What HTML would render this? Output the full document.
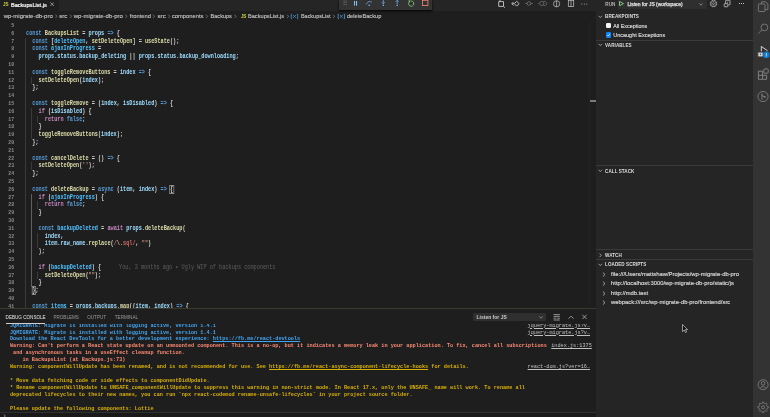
<!DOCTYPE html>
<html><head><meta charset="utf-8">
<style>
*{box-sizing:border-box}
html,body{margin:0;padding:0;width:770px;height:417px;overflow:hidden;background:#1e1e1e;font-family:"Liberation Sans",sans-serif}
.abs{position:absolute}
#editor{will-change:transform;position:absolute;left:0;top:0;width:596px;height:308px;background:#1e1e1e;overflow:hidden}
#tabbar{position:absolute;left:0;top:0;width:596px;height:11px;background:#252526}
#tab{position:absolute;left:0;top:0;width:59px;height:11px;background:#1e1e1e}
.ln{font-weight:bold;position:absolute;left:0;width:14.2px;text-align:right;height:7.8px;line-height:7.8px;font-family:"Liberation Mono",monospace;font-size:5.9px;letter-spacing:0px;color:#8e8e8e;white-space:pre;transform:scaleX(0.828);transform-origin:100% 0}
.cl{font-weight:bold;position:absolute;left:26.2px;height:7.8px;line-height:7.8px;font-family:"Liberation Mono",monospace;font-size:6.3px;letter-spacing:0px;color:#d4d4d4;white-space:pre;transform:scaleX(0.828);transform-origin:0 0}
.blame{color:#5e5e5e;font-weight:normal}
.box{outline:0.5px solid #888;color:#d4d4d4}
.ig{position:absolute;width:0.6px;background:#3a3a3a}
.ig.act{background:#606060}
#bc{position:absolute;left:0;top:11px;width:400px;height:10px;line-height:10px;font-size:5.82px;color:#c4c4c4;-webkit-text-stroke:0.12px #c4c4c4;white-space:nowrap}
#bc span{position:absolute;top:0}
#bc .gt{font-size:4.5px;color:#a0a0a0;transform:scaleX(0.7)}
#panel{will-change:transform;position:absolute;left:0;top:308px;width:596px;height:109px;background:#1e1e1e;border-top:0.8px solid #3b3a2c;overflow:hidden}
.co{font-weight:bold;position:absolute;left:9.7px;height:7px;line-height:7px;font-family:"Liberation Mono",monospace;font-size:6.0px;letter-spacing:0px;white-space:pre;transform:scaleX(0.8667);transform-origin:0 0}
.co.b{color:#42a4f0}
.co.r{color:#fb8a72}
.co.y{color:#d8b000}
.co.lk{left:auto;right:4px;transform-origin:100% 0;color:#c0c0c0;text-decoration:underline;font-weight:normal}
#sidebar{will-change:transform;position:absolute;left:595.7px;top:0;width:157.3px;height:417px;background:#252526}
#activity{position:absolute;left:753px;top:0;width:17px;height:417px;background:#333333}
.sh{position:absolute;left:7.8px;font-size:4.58px;font-weight:bold;color:#dedede;letter-spacing:0.05px;line-height:6px;height:6px}
.sep{position:absolute;left:-1.3px;width:157.3px;height:0.6px;background:#3a3a3a}
.chev{position:absolute;left:0.8px}
.pt{position:absolute;top:6.2px;font-size:4.6px;color:#9a9a9a;line-height:6px;white-space:nowrap}
.sbt{position:absolute;font-size:5.6px;color:#d8d8d8;-webkit-text-stroke:0.16px #d8d8d8;line-height:7px;white-space:nowrap}
</style></head>
<body>
<div id="editor">
  <div id="tabbar"></div>
  <div id="tab"></div>
  <div class="ln" style="top:22.00px">5</div>
<div class="cl" style="top:22.00px"></div>
<div class="ln" style="top:29.80px">6</div>
<div class="cl" style="top:29.80px"><span style="color:#569cd6">const</span><span style="color:#d4d4d4"> </span><span style="color:#dcdcaa">BackupsList</span><span style="color:#d4d4d4"> = </span><span style="color:#9cdcfe">props</span><span style="color:#d4d4d4"> </span><span style="color:#569cd6">=&gt;</span><span style="color:#d4d4d4"> {</span></div>
<div class="ln" style="top:37.60px">7</div>
<div class="cl" style="top:37.60px"><span style="color:#d4d4d4">  </span><span style="color:#569cd6">const</span><span style="color:#d4d4d4"> [</span><span style="color:#4fc1ff">deleteOpen</span><span style="color:#d4d4d4">, </span><span style="color:#dcdcaa">setDeleteOpen</span><span style="color:#d4d4d4">] = </span><span style="color:#dcdcaa">useState</span><span style="color:#d4d4d4">();</span></div>
<div class="ln" style="top:45.40px">8</div>
<div class="cl" style="top:45.40px"><span style="color:#d4d4d4">  </span><span style="color:#569cd6">const</span><span style="color:#d4d4d4"> </span><span style="color:#4fc1ff">ajaxInProgress</span><span style="color:#d4d4d4"> =</span></div>
<div class="ln" style="top:53.20px">9</div>
<div class="cl" style="top:53.20px"><span style="color:#d4d4d4">    </span><span style="color:#9cdcfe">props</span><span style="color:#d4d4d4">.</span><span style="color:#9cdcfe">status</span><span style="color:#d4d4d4">.</span><span style="color:#9cdcfe">backup_deleting</span><span style="color:#d4d4d4"> || </span><span style="color:#9cdcfe">props</span><span style="color:#d4d4d4">.</span><span style="color:#9cdcfe">status</span><span style="color:#d4d4d4">.</span><span style="color:#9cdcfe">backup_downloading</span><span style="color:#d4d4d4">;</span></div>
<div class="ln" style="top:61.00px">10</div>
<div class="cl" style="top:61.00px"></div>
<div class="ln" style="top:68.80px">11</div>
<div class="cl" style="top:68.80px"><span style="color:#d4d4d4">  </span><span style="color:#569cd6">const</span><span style="color:#d4d4d4"> </span><span style="color:#dcdcaa">toggleRemoveButtons</span><span style="color:#d4d4d4"> = </span><span style="color:#9cdcfe">index</span><span style="color:#d4d4d4"> </span><span style="color:#569cd6">=&gt;</span><span style="color:#d4d4d4"> {</span></div>
<div class="ln" style="top:76.60px">12</div>
<div class="cl" style="top:76.60px"><span style="color:#d4d4d4">    </span><span style="color:#dcdcaa">setDeleteOpen</span><span style="color:#d4d4d4">(</span><span style="color:#9cdcfe">index</span><span style="color:#d4d4d4">);</span></div>
<div class="ln" style="top:84.40px">13</div>
<div class="cl" style="top:84.40px"><span style="color:#d4d4d4">  };</span></div>
<div class="ln" style="top:92.20px">14</div>
<div class="cl" style="top:92.20px"></div>
<div class="ln" style="top:100.00px">15</div>
<div class="cl" style="top:100.00px"><span style="color:#d4d4d4">  </span><span style="color:#569cd6">const</span><span style="color:#d4d4d4"> </span><span style="color:#dcdcaa">toggleRemove</span><span style="color:#d4d4d4"> = (</span><span style="color:#9cdcfe">index</span><span style="color:#d4d4d4">, </span><span style="color:#9cdcfe">isDisabled</span><span style="color:#d4d4d4">) </span><span style="color:#569cd6">=&gt;</span><span style="color:#d4d4d4"> {</span></div>
<div class="ln" style="top:107.80px">16</div>
<div class="cl" style="top:107.80px"><span style="color:#d4d4d4">    </span><span style="color:#c586c0">if</span><span style="color:#d4d4d4"> (</span><span style="color:#9cdcfe">isDisabled</span><span style="color:#d4d4d4">) {</span></div>
<div class="ln" style="top:115.60px">17</div>
<div class="cl" style="top:115.60px"><span style="color:#d4d4d4">      </span><span style="color:#c586c0">return</span><span style="color:#d4d4d4"> </span><span style="color:#569cd6">false</span><span style="color:#d4d4d4">;</span></div>
<div class="ln" style="top:123.40px">18</div>
<div class="cl" style="top:123.40px"><span style="color:#d4d4d4">    }</span></div>
<div class="ln" style="top:131.20px">19</div>
<div class="cl" style="top:131.20px"><span style="color:#d4d4d4">    </span><span style="color:#dcdcaa">toggleRemoveButtons</span><span style="color:#d4d4d4">(</span><span style="color:#9cdcfe">index</span><span style="color:#d4d4d4">);</span></div>
<div class="ln" style="top:139.00px">20</div>
<div class="cl" style="top:139.00px"><span style="color:#d4d4d4">  };</span></div>
<div class="ln" style="top:146.80px">21</div>
<div class="cl" style="top:146.80px"></div>
<div class="ln" style="top:154.60px">22</div>
<div class="cl" style="top:154.60px"><span style="color:#d4d4d4">  </span><span style="color:#569cd6">const</span><span style="color:#d4d4d4"> </span><span style="color:#dcdcaa">cancelDelete</span><span style="color:#d4d4d4"> = () </span><span style="color:#569cd6">=&gt;</span><span style="color:#d4d4d4"> {</span></div>
<div class="ln" style="top:162.40px">23</div>
<div class="cl" style="top:162.40px"><span style="color:#d4d4d4">    </span><span style="color:#dcdcaa">setDeleteOpen</span><span style="color:#d4d4d4">(</span><span style="color:#ce9178">&#x27;&#x27;</span><span style="color:#d4d4d4">);</span></div>
<div class="ln" style="top:170.20px">24</div>
<div class="cl" style="top:170.20px"><span style="color:#d4d4d4">  };</span></div>
<div class="ln" style="top:178.00px">25</div>
<div class="cl" style="top:178.00px"></div>
<div class="ln" style="top:185.80px">26</div>
<div class="cl" style="top:185.80px"><span style="color:#d4d4d4">  </span><span style="color:#569cd6">const</span><span style="color:#d4d4d4"> </span><span style="color:#dcdcaa">deleteBackup</span><span style="color:#d4d4d4"> = </span><span style="color:#569cd6">async</span><span style="color:#d4d4d4"> (</span><span style="color:#9cdcfe">item</span><span style="color:#d4d4d4">, </span><span style="color:#9cdcfe">index</span><span style="color:#d4d4d4">) </span><span style="color:#569cd6">=&gt;</span><span style="color:#d4d4d4"> </span><span class="box">{</span></div>
<div class="ln" style="top:193.60px">27</div>
<div class="cl" style="top:193.60px"><span style="color:#d4d4d4">    </span><span style="color:#c586c0">if</span><span style="color:#d4d4d4"> (</span><span style="color:#4fc1ff">ajaxInProgress</span><span style="color:#d4d4d4">) {</span></div>
<div class="ln" style="top:201.40px">28</div>
<div class="cl" style="top:201.40px"><span style="color:#d4d4d4">      </span><span style="color:#c586c0">return</span><span style="color:#d4d4d4"> </span><span style="color:#569cd6">false</span><span style="color:#d4d4d4">;</span></div>
<div class="ln" style="top:209.20px">29</div>
<div class="cl" style="top:209.20px"><span style="color:#d4d4d4">    }</span></div>
<div class="ln" style="top:217.00px">30</div>
<div class="cl" style="top:217.00px"></div>
<div class="ln" style="top:224.80px">31</div>
<div class="cl" style="top:224.80px"><span style="color:#d4d4d4">    </span><span style="color:#569cd6">const</span><span style="color:#d4d4d4"> </span><span style="color:#4fc1ff">backupDeleted</span><span style="color:#d4d4d4"> = </span><span style="color:#c586c0">await</span><span style="color:#d4d4d4"> </span><span style="color:#9cdcfe">props</span><span style="color:#d4d4d4">.</span><span style="color:#dcdcaa">deleteBackup</span><span style="color:#d4d4d4">(</span></div>
<div class="ln" style="top:232.60px">32</div>
<div class="cl" style="top:232.60px"><span style="color:#d4d4d4">      </span><span style="color:#9cdcfe">index</span><span style="color:#d4d4d4">,</span></div>
<div class="ln" style="top:240.40px">33</div>
<div class="cl" style="top:240.40px"><span style="color:#d4d4d4">      </span><span style="color:#9cdcfe">item</span><span style="color:#d4d4d4">.</span><span style="color:#9cdcfe">raw_name</span><span style="color:#d4d4d4">.</span><span style="color:#dcdcaa">replace</span><span style="color:#d4d4d4">(</span><span style="color:#d16969">/</span><span style="color:#d7ba7d">\.</span><span style="color:#d16969">sql/</span><span style="color:#d4d4d4">, </span><span style="color:#ce9178">&quot;&quot;</span><span style="color:#d4d4d4">)</span></div>
<div class="ln" style="top:248.20px">34</div>
<div class="cl" style="top:248.20px"><span style="color:#d4d4d4">    </span><span style="color:#d4d4d4">)</span><span style="color:#d4d4d4">;</span></div>
<div class="ln" style="top:256.00px">35</div>
<div class="cl" style="top:256.00px"></div>
<div class="ln" style="top:263.80px">36</div>
<div class="cl" style="top:263.80px"><span style="color:#d4d4d4">    </span><span style="color:#c586c0">if</span><span style="color:#d4d4d4"> (</span><span style="color:#4fc1ff">backupDeleted</span><span style="color:#d4d4d4">) {</span></div>
<div class="ln" style="top:271.60px">37</div>
<div class="cl" style="top:271.60px"><span style="color:#d4d4d4">      </span><span style="color:#dcdcaa">setDeleteOpen</span><span style="color:#d4d4d4">(</span><span style="color:#ce9178">&quot;&quot;</span><span style="color:#d4d4d4">);</span></div>
<div class="ln" style="top:279.40px">38</div>
<div class="cl" style="top:279.40px"><span style="color:#d4d4d4">    }</span></div>
<div class="ln" style="top:287.20px">39</div>
<div class="cl" style="top:287.20px"><span style="color:#d4d4d4">  </span><span class="box">}</span><span style="color:#d4d4d4">;</span></div>
<div class="ln" style="top:295.00px">40</div>
<div class="cl" style="top:295.00px"></div>
<div class="ln" style="top:302.80px">41</div>
<div class="cl" style="top:302.80px"><span style="color:#d4d4d4">  </span><span style="color:#569cd6">const</span><span style="color:#d4d4d4"> </span><span style="color:#4fc1ff">items</span><span style="color:#d4d4d4"> = </span><span style="color:#9cdcfe">props</span><span style="color:#d4d4d4">.</span><span style="color:#9cdcfe">backups</span><span style="color:#d4d4d4">.</span><span style="color:#dcdcaa">map</span><span style="color:#d4d4d4">((</span><span style="color:#9cdcfe">item</span><span style="color:#d4d4d4">, </span><span style="color:#9cdcfe">index</span><span style="color:#d4d4d4">) </span><span style="color:#569cd6">=&gt;</span><span style="color:#d4d4d4"> {</span></div>
<div class="ig" style="left:24.80px;top:37.60px;height:273.00px"></div>
<div class="ig" style="left:31.06px;top:76.60px;height:7.80px"></div>
<div class="ig" style="left:31.06px;top:107.80px;height:31.20px"></div>
<div class="ig" style="left:37.32px;top:115.60px;height:7.80px"></div>
<div class="ig" style="left:31.06px;top:162.40px;height:7.80px"></div>
<div class="ig act" style="left:31.06px;top:193.60px;height:93.60px"></div>
<div class="ig" style="left:37.32px;top:201.40px;height:7.80px"></div>
<div class="ig" style="left:37.32px;top:232.60px;height:15.60px"></div>
<div class="ig" style="left:37.32px;top:271.60px;height:7.80px"></div>
<div class="cl blame" style="top:263.80px;left:119px">You, 3 months ago • Ugly WIP of backups components</div>

  <div class="abs" style="left:3.1px;top:3.4px;font-size:4.6px;font-weight:bold;color:#cbcb41;line-height:4px;letter-spacing:-0.2px">JS</div>
  <div class="abs" style="left:10.9px;top:1.6px;font-size:5.62px;color:#ffffff;-webkit-text-stroke:0.2px #fff;line-height:7px;white-space:nowrap">BackupsList.js</div>
  <svg class="abs" style="left:49.5px;top:2.3px" width="4.4" height="4.4" viewBox="0 0 4 4"><path d="M0.3 0.3L3.7 3.7M3.7 0.3L0.3 3.7" stroke="#c5c5c5" stroke-width="0.6"/></svg>
  <div id="bc">
    <span style="left:3.65px;font-size:6.02px">wp-migrate-db-pro</span>
    <span style="left:73.75px;font-size:6.03px">wp-migrate-db-pro</span>
    <span style="left:59.25px;font-size:6.11px">src</span>
    <span style="left:157.55px;font-size:6.11px">src</span>
    <span style="left:129.85px;font-size:5.74px">frontend</span>
    <span style="left:171.95px;font-size:5.79px">components</span>
    <span style="left:210.55px;font-size:5.57px">Backups</span>
    <span style="left:247.95px;font-size:5.66px">BackupsList.js</span>
    <span style="left:300.95px;font-size:5.48px">BackupsList</span>
    <span style="left:346.95px;font-size:5.68px">deleteBackup</span>
    <svg class="abs" style="left:0;top:0" width="400" height="10" viewBox="0 11 400 10">
      <g stroke="#a8a8a8" stroke-width="0.55" fill="none"><path d="M55.4 14.6 L57 16.3 L55.4 18"/><path d="M70 14.6 L71.6 16.3 L70 18"/><path d="M125.3 14.6 L126.9 16.3 L125.3 18"/><path d="M153.0 14.6 L154.6 16.3 L153.0 18"/><path d="M168.3 14.6 L169.9 16.3 L168.3 18"/><path d="M206.0 14.6 L207.6 16.3 L206.0 18"/><path d="M234.5 14.6 L236.1 16.3 L234.5 18"/><path d="M287.1 14.6 L288.7 16.3 L287.1 18"/><path d="M333.0 14.6 L334.6 16.3 L333.0 18"/></g>
      <text x="241" y="18.2" font-family="Liberation Sans" font-weight="bold" font-size="4.6" fill="#cbcb41" letter-spacing="-0.3">JS</text>
      <g stroke="#4b9fdf" stroke-width="0.75" fill="none"><path d="M292.1 14.2 h-0.8 v4.5 h0.8 M296.9 14.2 h0.8 v4.5 h-0.8"/><path d="M293.1 15 L295.9 17.8 M295.9 15 L293.1 17.8"/></g>
      <g stroke="#4b9fdf" stroke-width="0.75" fill="none"><path d="M338.9 14.2 h-0.8 v4.5 h0.8 M343.7 14.2 h0.8 v4.5 h-0.8"/><path d="M339.9 15 L342.7 17.8 M342.7 15 L339.9 17.8"/></g>
    </svg>
  </div>
  <div class="abs" style="left:338.6px;top:0;width:93.1px;height:9.7px;background:#333333;box-shadow:0 1.2px 2px #000"></div>
  <svg class="abs" style="left:338px;top:0" width="96" height="10" viewBox="338 0 96 10">
    <g fill="#7f8a7f"><rect x="343.6" y="0.6" width="1" height="0.8"/><rect x="345.6" y="0.6" width="1" height="0.8"/><rect x="343.6" y="2.3" width="1" height="0.8"/><rect x="345.6" y="2.3" width="1" height="0.8"/><rect x="343.6" y="4" width="1" height="0.8"/><rect x="345.6" y="4" width="1" height="0.8"/></g>
    <g fill="#75beff"><rect x="354" y="1" width="1.1" height="4.6"/><rect x="356" y="1" width="1.1" height="4.6"/></g>
    <path d="M366.3 4.4 C367.5 1.2 370.5 0.8 372 2.6" stroke="#75beff" stroke-width="0.7" fill="none"/><circle cx="369.2" cy="5.2" r="0.8" fill="#75beff"/>
    <path d="M383.3 0 V3.6 M381.8 2.2 L383.3 3.7 L384.8 2.2" stroke="#75beff" stroke-width="0.7" fill="none"/><circle cx="383.3" cy="5.2" r="0.8" fill="#75beff"/>
    <path d="M397.2 4 V0.4 M395.7 1.8 L397.2 0.3 L398.7 1.8" stroke="#75beff" stroke-width="0.7" fill="none"/><circle cx="397.2" cy="5.2" r="0.8" fill="#75beff"/>
    <path d="M409 2.2 A2.6 2.6 0 1 0 411.2 1" stroke="#89d185" stroke-width="0.8" fill="none"/><path d="M408.2 0.6 L410.6 0.6 L409.6 2.8Z" fill="#89d185"/>
    <rect x="422.4" y="0.3" width="5.5" height="5.3" stroke="#f48771" stroke-width="0.8" fill="none"/>
  </svg>
  <svg class="abs" style="left:494px;top:0" width="96" height="10" viewBox="494 0 96 10">
    <g stroke="#c8c8c8" stroke-width="0.9" fill="none">
      <path d="M498.7 1.6 h4.8 v4.8 h-4.8z M500 0 v1.6 M503.5 6.4 l1.4 1.2"/>
      <path d="M511.8 3.7 L513.6 1.9 M511.8 3.7 L513.6 5.5 M512.2 3.7 h1.6"/>
      <path d="M514.3 3.7 L516.7 1.3 L519.1 3.7 L516.7 6.1 Z"/>
    </g>
    <g stroke="#8a8a8a" stroke-width="0.6" fill="none">
      <circle cx="529" cy="3.5" r="1.8"/><path d="M525.3 3.5 h1.9 M530.8 3.5 h2"/>
      <circle cx="541.8" cy="3.5" r="2.1"/><path d="M543.6 1.6 A2.1 2.1 0 1 1 543.6 5.4"/><path d="M539 3.5 h-0.8"/>
    </g>
    <g stroke="#c5c5c5" stroke-width="0.7" fill="none">
      <circle cx="556.6" cy="3.8" r="3.1"/><path d="M556.6 0.7 v6.2"/>
      <rect x="568.3" y="0.3" width="5.4" height="6.2"/><path d="M571 0.3 v6.2"/>
    </g>
    <g fill="#c5c5c5"><circle cx="581.8" cy="4" r="0.5"/><circle cx="584.3" cy="4" r="0.5"/><circle cx="586.8" cy="4" r="0.5"/></g>
  </svg>
  <div class="abs" style="left:589px;top:21px;width:1.4px;height:287px;background:#222222"></div>
  <div class="abs" style="left:590px;top:100px;width:6px;height:2px;background:#7a7a7a"></div>
</div>
<div id="panel">
  <div class="abs" style="left:0;top:15.3px;width:596px;height:88px;overflow:hidden"><div class="co b" style="top:-2.70px">JQMIGRATE: Migrate is installed with logging active, version 1.4.1</div>
<div class="co lk" style="top:-2.70px;right:6.2px">jquery-migrate.js?v…</div>
<div class="co b" style="top:4.21px">JQMIGRATE: Migrate is installed with logging active, version 1.4.1</div>
<div class="co lk" style="top:4.21px;right:6.2px">jquery-migrate.js?v…</div>
<div class="co b" style="top:11.12px">Download the React DevTools for a better development experience: <u>https://fb.me/react-devtools</u></div>
<div class="co r" style="top:18.03px">Warning: Can&#x27;t perform a React state update on an unmounted component. This is a no-op, but it indicates a memory leak in your application. To fix, cancel all subscriptions</div>
<div class="co lk" style="top:18.03px;right:4px">index.js:1375</div>
<div class="co r" style="top:24.94px"> and asynchronous tasks in a useEffect cleanup function.</div>
<div class="co r" style="top:31.85px">    in BackupsList (at Backups.js:73)</div>
<div class="co y" style="top:38.76px">Warning: componentWillUpdate has been renamed, and is not recommended for use. See <u>https://fb.me/react-async-component-lifecycle-hooks</u> for details.</div>
<div class="co lk" style="top:38.76px;right:6.2px">react-dom.js?ver=16…</div>
<div class="co y" style="top:45.67px"></div>
<div class="co y" style="top:52.58px">* Move data fetching code or side effects to componentDidUpdate.</div>
<div class="co y" style="top:59.49px">* Rename componentWillUpdate to UNSAFE_componentWillUpdate to suppress this warning in non-strict mode. In React 17.x, only the UNSAFE_ name will work. To rename all</div>
<div class="co y" style="top:66.40px">deprecated lifecycles to their new names, you can run `npx react-codemod rename-unsafe-lifecycles` in your project source folder.</div>
<div class="co y" style="top:73.31px"></div>
<div class="co y" style="top:80.22px">Please update the following components: Lottie</div></div>

  <div class="pt" style="left:5.6px;color:#e7e7e7">DEBUG CONSOLE</div>
  <div class="abs" style="left:5.6px;top:13.7px;width:39.8px;height:0.7px;background:#d0d0d0"></div>
  <div class="pt" style="left:53.4px">PROBLEMS</div>
  <div class="pt" style="left:87.2px">OUTPUT</div>
  <div class="pt" style="left:114.8px">TERMINAL</div>
  <div class="abs" style="left:473px;top:4.4px;width:73px;height:7.6px;background:#2f2f30;border-radius:1px"></div>
  <div class="abs" style="left:476.5px;top:4.6px;font-size:5px;font-weight:bold;color:#cccccc;line-height:7px;white-space:nowrap">Listen for JS</div>
  <svg class="abs" style="left:538.6px;top:6.8px" width="4" height="3" viewBox="0 0 4 3"><path d="M0.3 0.6 L2 2.2 L3.7 0.6" stroke="#c5c5c5" stroke-width="0.6" fill="none"/></svg>
  <svg class="abs" style="left:553px;top:4px" width="36" height="8" viewBox="553 312 36 8">
    <g stroke="#c5c5c5" stroke-width="0.7" fill="none">
      <path d="M553.6 313.6 h6.2 M553.6 315.4 h6.2 M553.6 317.2 h2.6 M557.2 317.2 h2.6 M553.6 319 h6.2"/>
      <path d="M568.6 317.6 L571.1 315.1 L573.6 317.6"/>
      <path d="M582.4 313.8 L586.6 318 M586.6 313.8 L582.4 318"/>
    </g>
  </svg>
  <div class="abs" style="left:0;top:103px;width:596px;height:1px;background:#303030"></div>
  <div class="abs" style="left:0;top:104px;width:596px;height:6px;background:#1a1a1a"></div>
  <svg class="abs" style="left:2.6px;top:105.2px" width="4" height="4" viewBox="0 0 4 4"><path d="M0.6 0.4 L2.4 2 L0.6 3.6" stroke="#c5c5c5" stroke-width="0.6" fill="none"/></svg>
</div>
<div id="sidebar"><div style="position:absolute;left:1.3px;top:0;width:157px;height:417px">
  <div class="sbt" style="left:8px;top:0.5px;font-size:4.66px;color:#c4c4c4;line-height:7px;-webkit-text-stroke:0.1px #c4c4c4">RUN</div>
  <div class="abs" style="left:20.6px;top:0;width:89.4px;height:8.6px;background:#2f2f30"></div>
  <svg class="abs" style="left:21.8px;top:1.2px" width="5" height="5.2" viewBox="0 0 5 5.2"><path d="M0.5 0.5 L4.5 2.6 L0.5 4.7Z" stroke="#89d185" stroke-width="0.9" fill="none" stroke-linejoin="round"/></svg>
  <div class="sbt" style="left:30.2px;top:0.8px;font-size:4.9px;color:#e0e0e0;line-height:7px;-webkit-text-stroke:0.25px #e0e0e0">Listen for JS (workspace)</div>
  <svg class="abs" style="left:102px;top:3px" width="4" height="3" viewBox="0 0 4 3"><path d="M0.3 0.6 L2 2.2 L3.7 0.6" stroke="#c5c5c5" stroke-width="0.6" fill="none"/></svg>
  <svg class="abs" style="left:111.9px;top:0" width="9" height="8" viewBox="0 0 9 8"><path d="M6.96 4.04 L7.69 4.46 L7.36 5.25 L6.55 5.03 L6.27 5.37 L5.93 5.65 L6.15 6.46 L5.36 6.79 L4.94 6.06 L4.50 6.10 L4.06 6.06 L3.64 6.79 L2.85 6.46 L3.07 5.65 L2.73 5.37 L2.45 5.03 L1.64 5.25 L1.31 4.46 L2.04 4.04 L2.00 3.60 L2.04 3.16 L1.31 2.74 L1.64 1.95 L2.45 2.17 L2.73 1.83 L3.07 1.55 L2.85 0.74 L3.64 0.41 L4.06 1.14 L4.50 1.10 L4.94 1.14 L5.36 0.41 L6.15 0.74 L5.93 1.55 L6.27 1.83 L6.55 2.17 L7.36 1.95 L7.69 2.74 L6.96 3.16 L7.00 3.60Z" stroke="#c8c8c8" stroke-width="0.75" fill="none"/><circle cx="4.5" cy="3.6" r="0.9" stroke="#c8c8c8" stroke-width="0.6" fill="none"/></svg>
  <svg class="abs" style="left:126px;top:0" width="9" height="8" viewBox="0 0 9 8"><path d="M2.6 3.4 V0.8 q0 -0.5 0.5 -0.5 h3.4 q0.5 0 0.5 0.5 v3.6 q0 0.5 -0.5 0.5 h-1.2" stroke="#c8c8c8" stroke-width="0.8" fill="none"/><rect x="1.2" y="3.7" width="3.6" height="3.1" rx="0.5" stroke="#c8c8c8" stroke-width="0.8" fill="none"/><path d="M4.6 1.8 v1.6" stroke="#c8c8c8" stroke-width="0.6"/></svg>
  <div class="abs" style="left:142px;top:3.2px;width:1px;height:1px;background:#c5c5c5;box-shadow:2px 0 #c5c5c5,4px 0 #c5c5c5"></div>

  <svg class="chev" style="top:14.5px" width="5" height="4" viewBox="0 0 5 4"><path d="M0.6 0.8 L2.3 2.6 L4 0.8" stroke="#c8c8c8" stroke-width="0.7" fill="none"/></svg>
  <div class="sh" style="top:14.3px">BREAKPOINTS</div>
  <div class="abs" style="left:8.5px;top:22.9px;width:5.6px;height:5.6px;border-radius:1.2px;background:#f5f5f5"></div>
  <div class="sbt" style="left:15.9px;top:22.9px;font-size:5.45px">All Exceptions</div>
  <div class="abs" style="left:8.5px;top:32.1px;width:5.6px;height:5.6px;border-radius:1.2px;background:#0a84ff"></div>
  <svg class="abs" style="left:8.7px;top:32.1px" width="5.3" height="5.7" viewBox="0 0 5.3 5.7"><path d="M1.3 3 L2.3 4 L4 1.8" stroke="#fff" stroke-width="0.7" fill="none"/></svg>
  <div class="sbt" style="left:15.9px;top:31.9px;font-size:5.5px">Uncaught Exceptions</div>
  <div class="sep" style="top:40.3px"></div>
  <svg class="chev" style="top:43.3px" width="5" height="4" viewBox="0 0 5 4"><path d="M0.6 0.8 L2.3 2.6 L4 0.8" stroke="#c8c8c8" stroke-width="0.7" fill="none"/></svg>
  <div class="sh" style="top:42.9px">VARIABLES</div>
  <div class="sep" style="top:165px"></div>
  <svg class="chev" style="top:169.3px" width="5" height="4" viewBox="0 0 5 4"><path d="M0.6 0.8 L2.3 2.6 L4 0.8" stroke="#c8c8c8" stroke-width="0.7" fill="none"/></svg>
  <div class="sh" style="top:169.1px">CALL STACK</div>
  <div class="sep" style="top:249.1px"></div>
  <svg class="chev" style="top:252.5px;left:0.8px" width="5" height="5" viewBox="0 0 5 5"><path d="M1.5 0.6 L3.3 2.4 L1.5 4.2" stroke="#c8c8c8" stroke-width="0.7" fill="none"/></svg>
  <div class="sh" style="top:253.3px">WATCH</div>
  <div class="sep" style="top:259.2px"></div>
  <svg class="chev" style="top:262.9px" width="5" height="4" viewBox="0 0 5 4"><path d="M0.6 0.8 L2.3 2.6 L4 0.8" stroke="#c8c8c8" stroke-width="0.7" fill="none"/></svg>
  <div class="sh" style="top:262.3px">LOADED SCRIPTS</div>
  <svg class="abs" style="left:5.0px;top:272.00px" width="5" height="6" viewBox="0 0 5 6"><path d="M0.9 0.6 L3 2.6 L0.9 4.6" stroke="#c8c8c8" stroke-width="0.75" fill="none"/></svg>
<div class="sbt" style="left:13.8px;top:271.00px;font-size:5.85px">file:///Users/mattshaw/Projects/wp-migrate-db-pro</div>
<svg class="abs" style="left:5.0px;top:281.40px" width="5" height="6" viewBox="0 0 5 6"><path d="M0.9 0.6 L3 2.6 L0.9 4.6" stroke="#c8c8c8" stroke-width="0.75" fill="none"/></svg>
<div class="sbt" style="left:13.8px;top:280.40px;font-size:5.85px">http://localhost:3000/wp-migrate-db-pro/static/js</div>
<svg class="abs" style="left:5.0px;top:290.80px" width="5" height="6" viewBox="0 0 5 6"><path d="M0.9 0.6 L3 2.6 L0.9 4.6" stroke="#c8c8c8" stroke-width="0.75" fill="none"/></svg>
<div class="sbt" style="left:13.8px;top:289.80px;font-size:5.85px">http://mdb.test</div>
<svg class="abs" style="left:5.0px;top:300.20px" width="5" height="6" viewBox="0 0 5 6"><path d="M0.9 0.6 L3 2.6 L0.9 4.6" stroke="#c8c8c8" stroke-width="0.75" fill="none"/></svg>
<div class="sbt" style="left:13.8px;top:299.20px;font-size:5.85px">webpack:///src/wp-migrate-db-pro/frontend/src</div>
  <svg class="abs" style="left:84.5px;top:323.6px" width="7" height="9" viewBox="0 0 7 9"><path d="M0.5 0.5 V7.6 L2.2 6 L3.5 8.5 L4.6 8 L3.4 5.6 L5.6 5.6Z" fill="#111" stroke="#e8e8e8" stroke-width="0.6"/></svg>
</div></div>
<div id="activity">
  <svg class="abs" style="left:0;top:0" width="17" height="417" viewBox="753 0 17 417">
    <g stroke="#858585" stroke-width="0.8" fill="none" stroke-linejoin="round">
      <path d="M761.6 3.9 V1.8 h4.1 l2.2 2.2 v5.6 h-2.9"/><path d="M758.4 4.7 q0 -0.8 0.8 -0.8 h5 q0.8 0 0.8 0.8 v6 q0 0.8 -0.8 0.8 h-5 q-0.8 0 -0.8 -0.8z"/>
      <circle cx="764.4" cy="27.4" r="3.4"/><path d="M762 29.8 L758.4 33.4"/>
      <path d="M759.4 65.5"/>
      <path d="M758.4 71.2 h4.2 v8.1 h-4.2z M758.4 75.3 h8.2 v4 h-4" stroke-width="0.95"/><rect x="763.8" y="68.9" width="4.4" height="4.3" rx="0.9" stroke-width="0.95"/>
      <circle cx="763" cy="96.5" r="5.1"/><path d="M762 93.3 v6.4 M762 94.8 q0.4 1.8 2.6 2" stroke-width="0.9"/><circle cx="764.9" cy="96.8" r="0.9" fill="#858585" stroke="none"/>
      <circle cx="763.1" cy="384.7" r="5"/><circle cx="763.1" cy="383.3" r="1.8"/><path d="M760 388.3 q3.1 -3.4 6.2 0"/>
      <circle cx="763.1" cy="407.3" r="1.5"/>
    </g>
    <path d="M767.01 406.44 L768.36 406.62 L768.36 407.98 L767.01 408.16 L766.80 408.83 L766.47 409.46 L767.30 410.53 L766.33 411.50 L765.26 410.67 L764.63 411.00 L763.96 411.21 L763.78 412.56 L762.42 412.56 L762.24 411.21 L761.57 411.00 L760.94 410.67 L759.87 411.50 L758.90 410.53 L759.73 409.46 L759.40 408.83 L759.19 408.16 L757.84 407.98 L757.84 406.62 L759.19 406.44 L759.40 405.77 L759.73 405.14 L758.90 404.07 L759.87 403.10 L760.94 403.93 L761.57 403.60 L762.24 403.39 L762.42 402.04 L763.78 402.04 L763.96 403.39 L764.63 403.60 L765.26 403.93 L766.33 403.10 L767.30 404.07 L766.47 405.14 L766.80 405.77Z" stroke="#858585" stroke-width="0.7" fill="none"/>
    <g stroke="#e0e0e0" stroke-width="0.9" fill="none" stroke-linejoin="round">
      <path d="M761.3 51.4 V46.4 L767.6 50.8"/>
    </g>
    <path d="M758.4 52.6 h4.2 v3.8 h-4.2z" fill="#e0e0e0"/><path d="M757.6 53.2 h0.8 M757.6 55.8 h0.8 M762.6 53.2 h0.6" stroke="#e0e0e0" stroke-width="0.6"/><circle cx="760.5" cy="54.4" r="0.8" fill="#555"/>
    <circle cx="766.3" cy="54.9" r="3.3" fill="#0c78d0"/>
    <path d="M766.3 53.4 v2.8" stroke="#e8f2ff" stroke-width="0.8" stroke-linecap="round"/>
  </svg>
</div>
</body></html>
